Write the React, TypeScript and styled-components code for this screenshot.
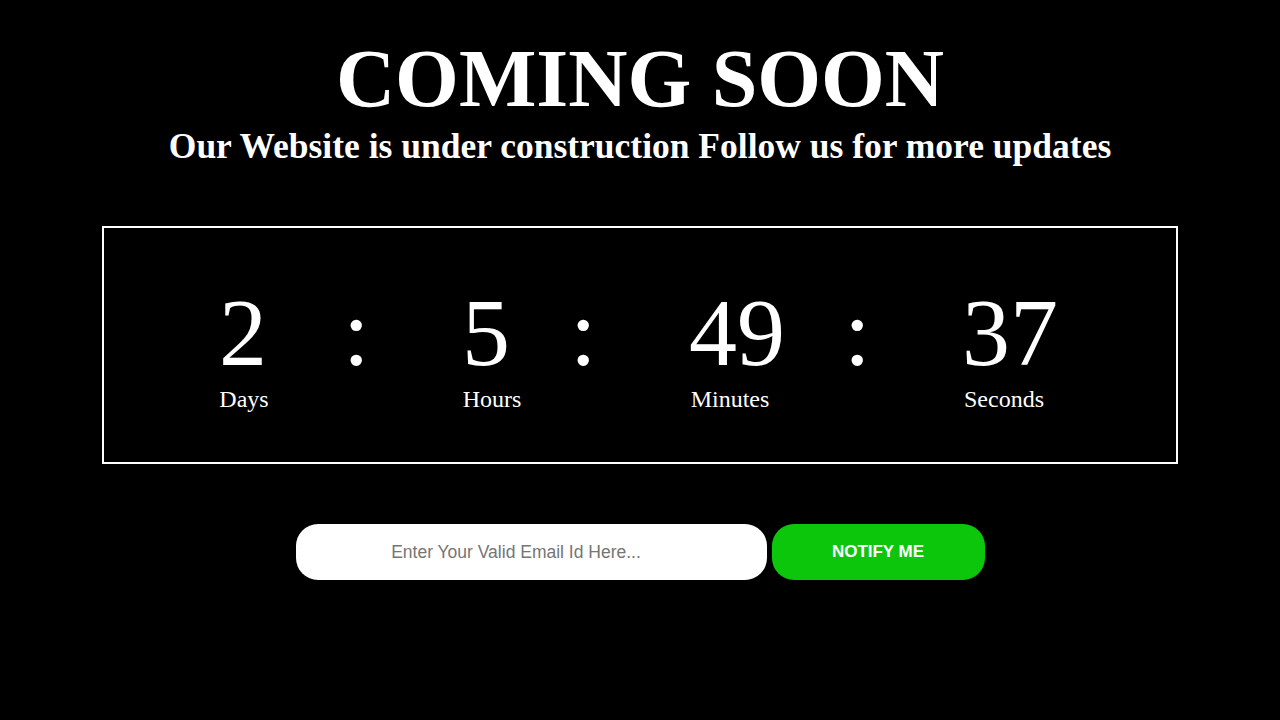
import React from 'react'
import styled, { createGlobalStyle } from 'styled-components'

const GlobalStyle = createGlobalStyle`
    html, body {
        margin: 0;
        padding: 0;
        background-color: #000000;
    }
    body {
        font-family: "Liberation Serif", "Times New Roman", serif;
        color: #ffffff;
    }
`

const Page = styled.div`
    min-height: 720px;
    background-color: #000000;
    display: flex;
    flex-direction: column;
    align-items: center;
    padding-top: 38px;
    box-sizing: border-box;
`

const Title = styled.h1`
    margin: 0;
    font-size: 82px;
    line-height: 1;
    font-weight: 700;
    color: #ffffff;
`

const Subtitle = styled.h3`
    margin: 5px 0 0;
    font-size: 35.5px;
    line-height: 42px;
    font-weight: 700;
    color: #ffffff;
`

const TimerBox = styled.div`
    margin-top: 59px;
    width: 1076px;
    height: 238px;
    box-sizing: border-box;
    border: 2px solid #ffffff;
    display: flex;
    align-items: flex-start;
    padding: 57px 0 0 89px;
`

const Unit = styled.div<{ $w: number }>`
    width: ${({ $w }) => $w}px;
    display: flex;
    flex-direction: column;
    align-items: center;
`

// $nudge: extra left padding, moves the centred text right by half of it
const Digits = styled.span<{ $nudge: number }>`
    padding-left: ${({ $nudge }) => $nudge}px;
    font-size: 96px;
    line-height: 1;
    color: #ffffff;
`

const Label = styled.span<{ $nudge: number }>`
    margin-top: 4px;
    padding-left: ${({ $nudge }) => $nudge}px;
    font-size: 24px;
    line-height: 1.2;
    color: #ffffff;
`

const Colon = styled.span<{ $l: number; $r: number }>`
    font-size: 96px;
    line-height: 1;
    margin: 0 ${({ $r }) => $r}px 0 ${({ $l }) => $l}px;
    width: 20px;
    text-align: center;
`

const Form = styled.form`
    margin-top: 60px;
    display: flex;
    gap: 5px;
`

const EmailInput = styled.input`
    width: 471px;
    height: 56px;
    box-sizing: border-box;
    border: none;
    outline: none;
    border-radius: 22px;
    background-color: #ffffff;
    padding: 0 40px 0 10px;
    text-align: center;
    font-family: "Liberation Sans", Arial, sans-serif;
    font-size: 17.5px;
    color: #333333;

    &::placeholder {
        color: #757575;
    }
`

const NotifyButton = styled.button`
    width: 213px;
    height: 56px;
    border: none;
    border-radius: 22px;
    background-color: #0cc60c;
    color: #ffffff;
    font-family: "Liberation Sans", Arial, sans-serif;
    font-size: 17px;
    font-weight: 700;
    cursor: pointer;
`

const timeParts = [
    { value: '2', label: 'Days', w: 100, digitNudge: 0, labelNudge: 2 },
    { value: '5', label: 'Hours', w: 100, digitNudge: 0, labelNudge: 12 },
    { value: '49', label: 'Minutes', w: 120, digitNudge: 14, labelNudge: 0 },
    { value: '37', label: 'Seconds', w: 120, digitNudge: 12, labelNudge: 0 },
]

// space before / after each colon, so the columns sit as in the design
const colonGaps = [
    { l: 50, r: 73 },
    { l: 34, r: 80 },
    { l: 54, r: 80 },
]

const App: React.FunctionComponent = () => {
    return (
        <>
            <GlobalStyle />
            <Page>
                <Title>COMING SOON</Title>
                <Subtitle>Our Website is under construction Follow us for more updates</Subtitle>

                <TimerBox>
                    {timeParts.map((part, index) => (
                        <React.Fragment key={part.label}>
                            <Unit $w={part.w}>
                                <Digits $nudge={part.digitNudge}>{part.value}</Digits>
                                <Label $nudge={part.labelNudge}>{part.label}</Label>
                            </Unit>
                            {index < colonGaps.length && (
                                <Colon $l={colonGaps[index].l} $r={colonGaps[index].r}>:</Colon>
                            )}
                        </React.Fragment>
                    ))}
                </TimerBox>

                <Form onSubmit={e => e.preventDefault()}>
                    <EmailInput type="email" placeholder="Enter Your Valid Email Id Here..." />
                    <NotifyButton type="submit">NOTIFY ME</NotifyButton>
                </Form>
            </Page>
        </>
    )
}

export default App
